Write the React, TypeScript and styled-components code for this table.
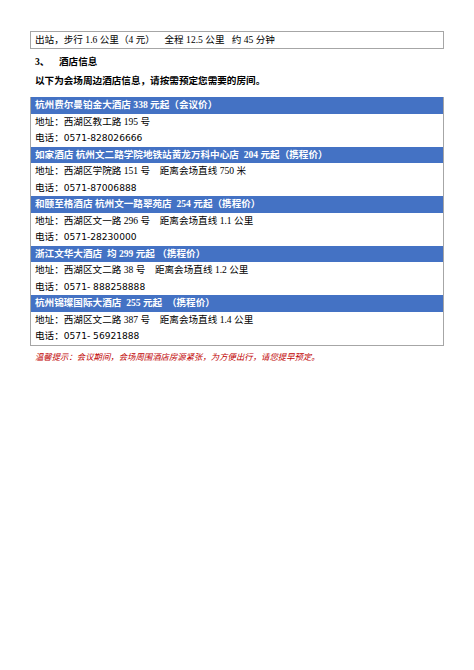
import React from "react";
import styled, { createGlobalStyle } from "styled-components";

const GlobalStyle = createGlobalStyle`
  html, body {
    margin: 0;
    padding: 0;
    background: #ffffff;
  }
  body {
    font-family: "Liberation Serif", "Noto Sans CJK SC", serif;
    color: #000;
  }
`;

const Page = styled.div`
  width: 474px;
  height: 670px;
  box-sizing: border-box;
  padding: 31px 30px 0 30px;
  background: #fff;
  font-family: "Liberation Serif", "Noto Sans CJK SC", serif;
  font-size: 9.6px;
`;

const TopBox = styled.div`
  height: 18px;
  box-sizing: border-box;
  border: 1px solid #a6a6a6;
  padding-left: 4px;
  line-height: 16px;
  white-space: pre;
`;

const SectionTitle = styled.div`
  margin-top: 5px;
  padding-left: 5px;
  line-height: 16px;
  font-weight: 700;
  white-space: pre;
`;

const TitleNum = styled.span`
  display: inline-block;
  width: 24px;
`;

const Intro = styled.div`
  margin-top: 3px;
  padding-left: 5px;
  line-height: 16px;
  font-weight: 700;
`;

const Table = styled.div`
  margin-top: 8px;
  border: 1px solid #a6a6a6;
  border-top: none;
`;

const HeaderRow = styled.div`
  height: 16.5px;
  line-height: 16.5px;
  background: #4472c4;
  color: #ffffff;
  font-weight: 700;
  padding-left: 4px;
  margin: 0 -1px;
  border-left: 1px solid #a6a6a6;
  border-right: 1px solid #a6a6a6;
  white-space: pre;
`;

const InfoRow = styled.div`
  height: 16.5px;
  line-height: 16.5px;
  padding-left: 4px;
  white-space: pre;
`;

const Phone = styled.span`
  font-family: "DejaVu Sans", "Noto Sans CJK SC", sans-serif;
  font-size: 9.1px;
`;

const Note = styled.div`
  margin-top: 5px;
  padding-left: 5px;
  line-height: 14px;
  font-size: 8.4px;
  font-style: italic;
  color: #c00000;
`;

type Hotel = {
  title: string;
  address: string;
  phone: string;
};

const hotels: Hotel[] = [
  {
    title: "杭州费尔曼铂金大酒店 338 元起（会议价）",
    address: "地址：西湖区教工路 195 号",
    phone: "0571-828026666",
  },
  {
    title: "如家酒店 杭州文二路学院地铁站黄龙万科中心店  204 元起（携程价）",
    address: "地址：西湖区学院路 151 号　距离会场直线 750 米",
    phone: "0571-87006888",
  },
  {
    title: "和颐至格酒店 杭州文一路翠苑店  254 元起（携程价）",
    address: "地址：西湖区文一路 296 号　距离会场直线 1.1 公里",
    phone: "0571-28230000",
  },
  {
    title: "浙江文华大酒店  均 299 元起 （携程价）",
    address: "地址：西湖区文二路 38 号　距离会场直线 1.2 公里",
    phone: "0571- 888258888",
  },
  {
    title: "杭州锦璨国际大酒店  255 元起  （携程价）",
    address: "地址：西湖区文二路 387 号　距离会场直线 1.4 公里",
    phone: "0571- 56921888",
  },
];

export default function App() {
  return (
    <>
      <GlobalStyle />
      <Page>
        <TopBox>出站，步行 1.6 公里（4 元）　  全程 12.5 公里   约 45 分钟</TopBox>
        <SectionTitle>
          <TitleNum>3、</TitleNum>酒店信息
        </SectionTitle>
        <Intro>以下为会场周边酒店信息，请按需预定您需要的房间。</Intro>
        <Table>
          {hotels.map((h) => (
            <React.Fragment key={h.title}>
              <HeaderRow>{h.title}</HeaderRow>
              <InfoRow>{h.address}</InfoRow>
              <InfoRow>
                电话：<Phone>{h.phone}</Phone>
              </InfoRow>
            </React.Fragment>
          ))}
        </Table>
        <Note>温馨提示：会议期间，会场周围酒店房源紧张，为方便出行，请您提早预定。</Note>
      </Page>
    </>
  );
}
